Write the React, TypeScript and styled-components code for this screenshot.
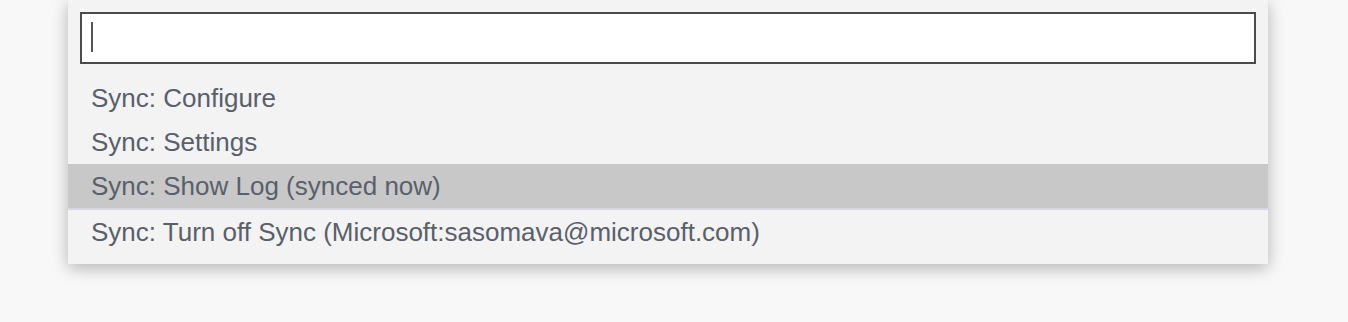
import React, { useState } from "react";
import styled, { createGlobalStyle } from "styled-components";

const GlobalStyle = createGlobalStyle`
  html, body {
    margin: 0;
    padding: 0;
    background: #f8f8f8;
    font-family: "Liberation Sans", Arial, sans-serif;
  }
`;

const SPage = styled.div`
  width: 1348px;
  height: 322px;
  display: flex;
  align-items: flex-start;
  padding-left: 68px;
  box-sizing: border-box;
  background: #f8f8f8;
  overflow: hidden;
`;

const SWidget = styled.div`
  width: 1200px;
  background: #f3f3f3;
  box-shadow: 0 4px 16px rgba(0, 0, 0, 0.28);
  padding: 12px 0 10px;
  display: flex;
  flex-direction: column;
`;

const SInputWrap = styled.div`
  position: relative;
  padding: 0 12px 12px;
`;

const SInput = styled.input`
  box-sizing: border-box;
  width: 100%;
  height: 52px;
  border: 2px solid #4b4b4b;
  background: #ffffff;
  outline: none;
  padding: 0 10px;
  font-size: 26px;
  font-family: inherit;
  color: #616161;
  caret-color: transparent;
`;

const SCaret = styled.span`
  position: absolute;
  left: 23px;
  top: 10px;
  width: 2px;
  height: 30px;
  background: #555555;
  pointer-events: none;
`;

const SList = styled.div`
  display: flex;
  flex-direction: column;
`;

const SRow = styled.div<{ $active?: boolean; $separator?: boolean }>`
  height: 44px;
  display: flex;
  align-items: center;
  padding: 0 23px;
  font-size: 26px;
  color: #59606b;
  background: ${({ $active }) => ($active ? "#c8c8c8" : "transparent")};
  border-top: ${({ $separator }) => ($separator ? "2px solid #d6d6e4" : "none")};
  cursor: pointer;
  white-space: nowrap;
`;

const items = [
  "Sync: Configure",
  "Sync: Settings",
  "Sync: Show Log (synced now)",
  "Sync: Turn off Sync (Microsoft:sasomava@microsoft.com)",
];

const App: React.FC = () => {
  const [value, setValue] = useState("");
  const active = 2;

  return (
    <SPage>
      <GlobalStyle />
      <SWidget>
        <SInputWrap>
          <SInput value={value} onChange={(e) => setValue(e.target.value)} />
          {value === "" && <SCaret />}
        </SInputWrap>
        <SList>
          {items.map((item, i) => (
            <SRow key={item} $active={i === active} $separator={i === 3}>
              {item}
            </SRow>
          ))}
        </SList>
      </SWidget>
    </SPage>
  );
};

export default App;
